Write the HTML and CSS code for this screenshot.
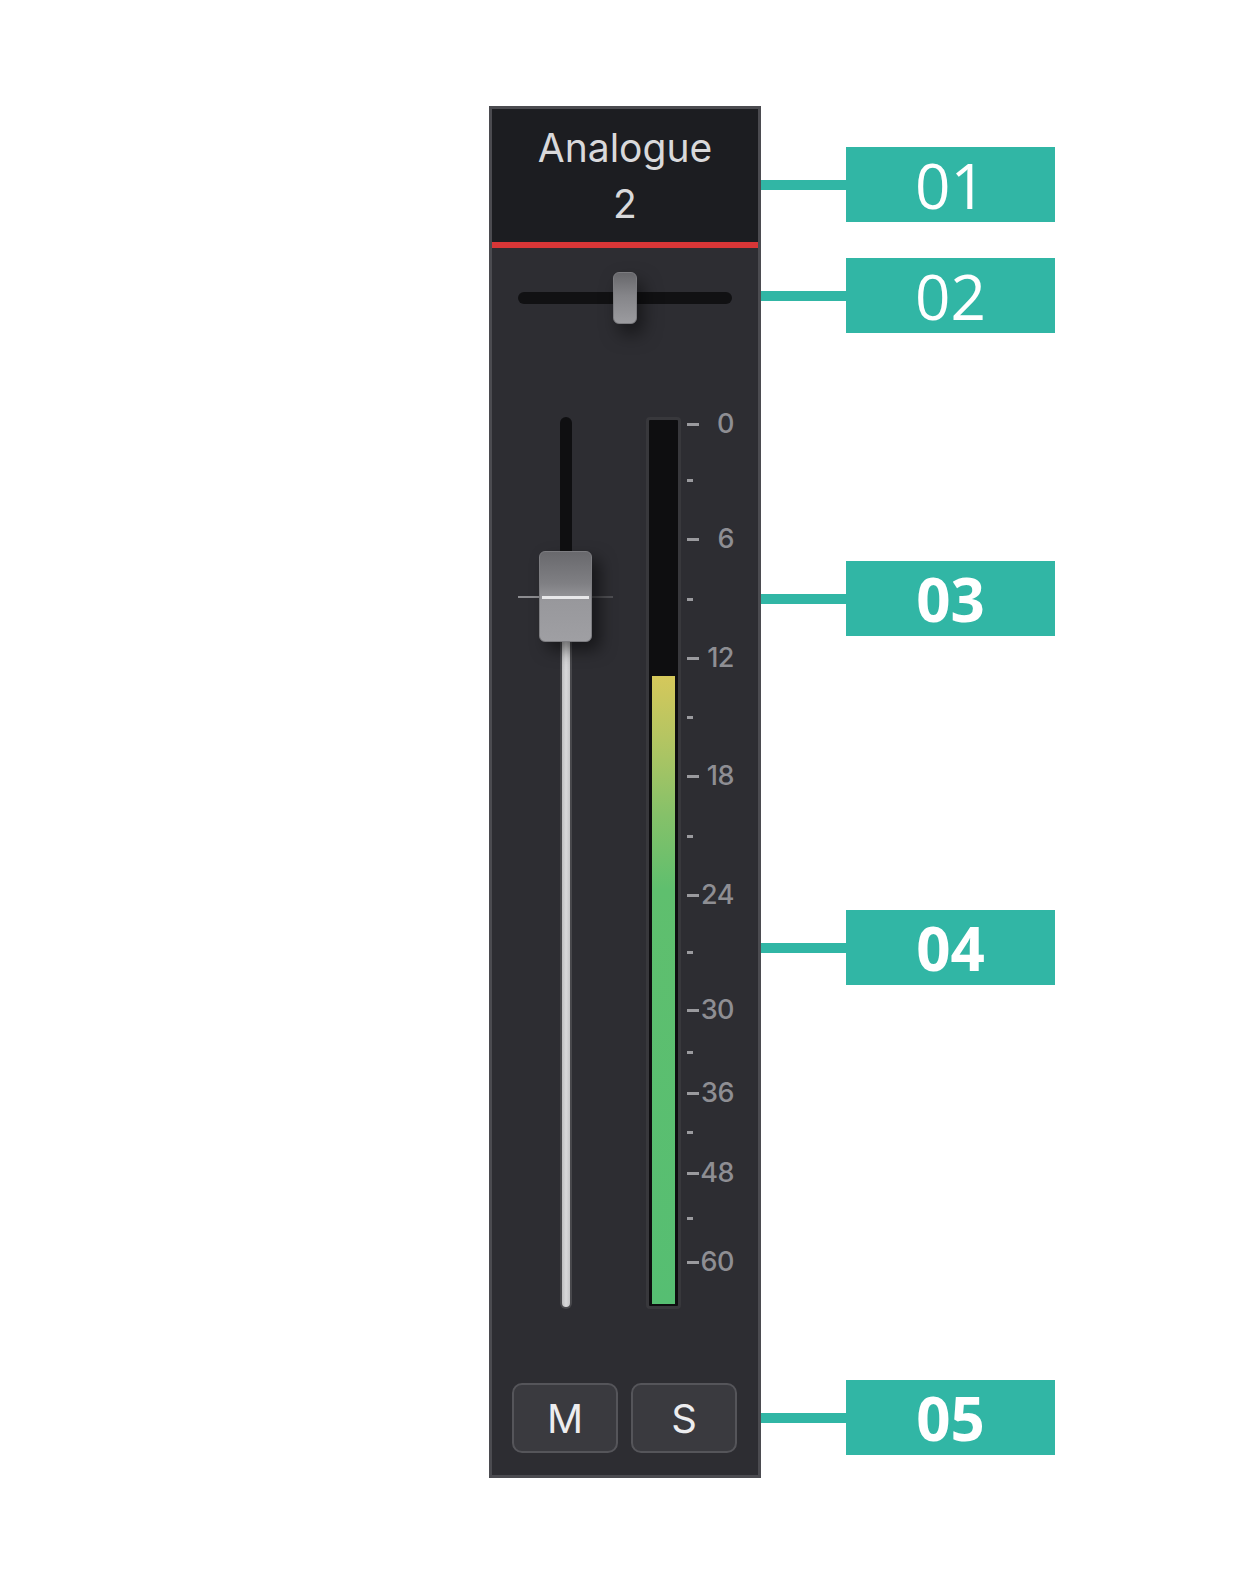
FILE: index.html
```html
<!DOCTYPE html>
<html lang="en">
<head>
<meta charset="utf-8">
<title>Channel strip – Analogue 2</title>
<link rel="stylesheet" href="styles.css">
</head>
<body>
<div class="stage">
  <section class="strip">
    <header class="strip-head">
      <div class="strip-name">Analogue<br>2</div>
    </header>
    <div class="strip-body">
      <div class="pan">
        <div class="pan-track"></div>
        <div class="pan-knob"></div>
      </div>

      <div class="levels">
        <div class="fader">
          <div class="fader-track">
            <div class="fader-track-top"></div>
            <div class="fader-track-bottom"></div>
          </div>
          <div class="fader-cap-wrap">
            <div class="fader-mark"></div>
            <div class="fader-cap"></div>
          </div>
        </div>

        <div class="meter">
          <div class="meter-fill" style="height:71%"></div>
        </div>

        <div class="scale">
          <div class="tick major" style="top:-7px"><i></i><span>0</span></div>
          <div class="tick minor" style="top:49px"><i></i></div>
          <div class="tick major" style="top:108px"><i></i><span>6</span></div>
          <div class="tick minor" style="top:168px"><i></i></div>
          <div class="tick major" style="top:227px"><i></i><span>12</span></div>
          <div class="tick minor" style="top:286px"><i></i></div>
          <div class="tick major" style="top:345px"><i></i><span>18</span></div>
          <div class="tick minor" style="top:405px"><i></i></div>
          <div class="tick major" style="top:464px"><i></i><span>24</span></div>
          <div class="tick minor" style="top:521px"><i></i></div>
          <div class="tick major" style="top:579px"><i></i><span>30</span></div>
          <div class="tick minor" style="top:621px"><i></i></div>
          <div class="tick major" style="top:662px"><i></i><span>36</span></div>
          <div class="tick minor" style="top:701px"><i></i></div>
          <div class="tick major" style="top:742px"><i></i><span>48</span></div>
          <div class="tick minor" style="top:787px"><i></i></div>
          <div class="tick major" style="top:831px"><i></i><span>60</span></div>
        </div>
      </div>

      <div class="buttons">
        <button class="btn" type="button">M</button>
        <button class="btn" type="button">S</button>
      </div>
    </div>
  </section>

  <div class="callouts">
    <div class="callout c1"><span class="leader"></span><span class="tag">01</span></div>
    <div class="callout c2"><span class="leader"></span><span class="tag">02</span></div>
    <div class="callout c3"><span class="leader"></span><span class="tag bold">03</span></div>
    <div class="callout c4"><span class="leader"></span><span class="tag bold">04</span></div>
    <div class="callout c5"><span class="leader"></span><span class="tag bold">05</span></div>
  </div>
</div>
</body>
</html>
```

FILE: styles.css
```css
html, body {
  margin: 0;
  padding: 0;
  background: #ffffff;
}

body {
  font-family: Inter, "Noto Sans", sans-serif;
}

.stage {
  display: flex;
  align-items: flex-start;
  margin: 106px 0 0 489px;
}

/* ---------- channel strip ---------- */

.strip {
  box-sizing: border-box;
  width: 272px;
  border: 3px solid #4b4b50;
  background: #2d2d32;
  display: flex;
  flex-direction: column;
}

.strip-head {
  background: #1c1d21;
  height: 139px;
  box-sizing: border-box;
  padding-top: 11px;
  border-bottom: 6px solid #d83637;
}

.strip-name {
  font-family: Inter, "Noto Sans", sans-serif;
  font-size: 39px;
  line-height: 56px;
  color: #d9d9db;
  text-align: center;
}

.strip-body {
  display: flex;
  flex-direction: column;
  padding: 24px 0 22px;
}

/* pan slider */
.pan {
  display: grid;
  place-items: center;
  height: 52px;
}

.pan-track,
.pan-knob {
  grid-area: 1 / 1;
}

.pan-track {
  width: 214px;
  height: 12px;
  border-radius: 6px;
  background: #111113;
}

.pan-knob {
  width: 24px;
  height: 52px;
  box-sizing: border-box;
  border-radius: 6px;
  border: 1px solid #7c7c80;
  background: linear-gradient(to bottom, #67676b 0%, #858589 45%, #9b9b9f 100%);
  box-shadow: 6px 10px 18px rgba(0, 0, 0, 0.5);
}

/* fader, meter and scale */
.levels {
  display: flex;
  align-items: flex-start;
  margin-top: 93px;
  padding-left: 26px;
  height: 892px;
}

.fader {
  width: 95px;
  height: 892px;
  display: grid;
  justify-items: center;
  align-items: start;
}

.fader-track,
.fader-cap-wrap {
  grid-area: 1 / 1;
}

.fader-track {
  width: 12px;
  height: 892px;
  display: flex;
  flex-direction: column;
}

.fader-track-top {
  height: 225px;
  background: #0f0f11;
  border-radius: 6px 6px 0 0;
}

.fader-track-bottom {
  flex: 1;
  box-sizing: border-box;
  border: 2px solid #48484c;
  border-top: 0;
  border-radius: 0 0 6px 6px;
  background: linear-gradient(to right, #bdbdbf, #d8d8da 50%, #c4c4c6);
}

.fader-cap-wrap {
  width: 95px;
  height: 91px;
  margin-top: 134px;
  display: grid;
  place-items: center;
}

.fader-mark,
.fader-cap {
  grid-area: 1 / 1;
}

.fader-mark {
  width: 95px;
  height: 2px;
  background: linear-gradient(to right, #8c8c90 0%, #8c8c90 45%, #4e4e52 55%, #4e4e52 100%);
}

.fader-cap {
  position: relative;
  width: 53px;
  height: 91px;
  box-sizing: border-box;
  border-radius: 6px;
  border: 1px solid #7d7d81;
  background: linear-gradient(to bottom, #69696d 0%, #7f7f83 35%, #98989c 55%, #9f9fa3 100%);
  box-shadow: 8px 8px 16px rgba(0, 0, 0, 0.5);
}

.fader-cap::after {
  content: "";
  position: absolute;
  left: 2px;
  right: 2px;
  top: 44px;
  height: 3px;
  background: #e8e8ea;
}

.meter {
  box-sizing: border-box;
  width: 35px;
  height: 892px;
  margin-left: 33px;
  border: 3px solid #38383c;
  border-radius: 4px;
  background: #0e0e10;
  padding: 0 3px 2px;
  display: flex;
  flex-direction: column;
  justify-content: flex-end;
}

.meter-fill {
  background: linear-gradient(to bottom, #d5c85b 0%, #b4c562 10%, #86c169 22%, #5fbf6e 34%, #56be72 100%);
}

.scale {
  position: relative;
  width: 53px;
  height: 892px;
  color: #8e8e93;
  font-family: Inter, "Noto Sans", sans-serif;
  font-size: 27px;
  font-weight: 500;
}

.tick {
  position: absolute;
  left: 6px;
  right: 0;
  height: 28px;
  display: flex;
  align-items: center;
}

.tick i {
  display: block;
  height: 3px;
  background: #9a9a9e;
}

.tick.major i {
  width: 12px;
}

.tick.minor i {
  width: 6px;
}

.tick span {
  flex: 1;
  text-align: right;
  line-height: 28px;
  letter-spacing: -0.5px;
}

/* mute / solo */
.buttons {
  display: flex;
  gap: 13px;
  margin-top: 74px;
  padding: 0 21px 0 20px;
}

.btn {
  width: 106px;
  height: 70px;
  box-sizing: border-box;
  border: 2px solid #55555a;
  border-radius: 10px;
  background: #3a3a3f;
  color: #ededef;
  font-family: Inter, "Noto Sans", sans-serif;
  font-size: 40px;
  font-weight: 400;
  padding: 0;
}

/* ---------- numbered callouts ---------- */

.callouts {
  display: flex;
  flex-direction: column;
}

.callout {
  display: flex;
  align-items: center;
}

.c1 { margin-top: 41px; }
.c2 { margin-top: 36px; }
.c3 { margin-top: 228px; }
.c4 { margin-top: 274px; }
.c5 { margin-top: 395px; }

.leader {
  width: 85px;
  height: 10px;
  background: #31b6a5;
}

.tag {
  width: 209px;
  height: 75px;
  background: #31b6a5;
  color: #ffffff;
  font-family: "Open Sans", "Noto Sans", sans-serif;
  font-size: 62px;
  font-weight: 400;
  display: flex;
  align-items: center;
  justify-content: center;
  line-height: 1;
}

.tag.bold {
  font-weight: 700;
  font-size: 60px;
}
```
